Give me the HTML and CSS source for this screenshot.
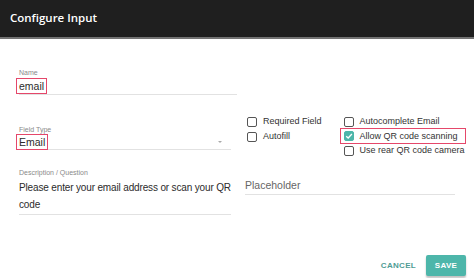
FILE: index.html
```html
<!DOCTYPE html>
<html lang="en">
<head>
    <meta charset="UTF-8">
    <title>Configure Input</title>
    <link rel="stylesheet" href="styles.css">
</head>
<body>
    <div class="dialog">
        <div class="dialog-header">Configure Input</div>

        <div class="dialog-body">
            <!-- name -->
            <div class="field field-name">
                <div class="field-label">Name</div>
                <div class="field-value"><span class="mark">email</span></div>
            </div>

            <div class="row row-type">
                <div class="field field-type">
                    <div class="field-label">Field Type</div>
                    <div class="field-value select">
                        <span class="mark">Email</span>
                        <span class="caret"></span>
                    </div>
                </div>

                <div class="options">
                    <div class="option-col">
                        <label class="check"><span class="box"></span>Required Field</label>
                        <label class="check"><span class="box"></span>Autof&#8204;i&#8204;l&#8204;l</label>
                    </div>
                    <div class="option-col">
                        <label class="check"><span class="box"></span>Autocomplete Email</label>
                        <label class="check mark-row"><span class="box checked">
                            <svg viewBox="0 0 10 10" width="8" height="8"><path d="M1.5 5.2 L4 7.5 L8.6 2.5" fill="none" stroke="#fff" stroke-width="1.6"/></svg>
                        </span>Allow QR code scanning</label>
                        <label class="check"><span class="box"></span>Use rear QR code camera</label>
                    </div>
                </div>
            </div>

            <div class="row row-desc">
                <div class="field field-desc">
                    <div class="field-label">Description / Question</div>
                    <div class="field-value multi">Please enter your email address or scan your QR code</div>
                </div>
                <div class="field field-placeholder">
                    <div class="field-value hint">Placeholder</div>
                </div>
            </div>
        </div>

        <div class="dialog-actions">
            <button class="btn btn-flat">CANCEL</button>
            <button class="btn btn-raised">SAVE</button>
        </div>
    </div>
</body>
</html>
```

FILE: styles.css
```css
:root {
    --teal: #4db6aa;
    --mark: #e5476a;
    --line: #e2e2e2;
    --text: #2b2b2b;
}

html, body {
    margin: 0;
    padding: 0;
    background: #fff;
}

body {
    font-family: "Liberation Sans", Arial, sans-serif;
    font-variant-ligatures: none;
    font-feature-settings: "liga" 0, "clig" 0;
    color: var(--text);
}

.dialog {
    width: 474px;
    height: 278px;
    display: flex;
    flex-direction: column;
}

.dialog-header {
    height: 37px;
    background: #1f1f1f;
    border-bottom: 2px solid #737373;
    color: #fff;
    font-family: "Open Sans", sans-serif;
    font-weight: 600;
    font-size: 11.5px;
    line-height: 36px;
    padding-left: 10px;
    box-sizing: content-box;
}

.dialog-body {
    flex: 1;
    padding: 0 0 0 19px;
}

.field-label {
    font-size: 7px;
    line-height: 10px;
    color: #8a8a8a;
}

.field-value {
    font-size: 10.5px;
    line-height: 16px;
    border-bottom: 1px solid var(--line);
}

.mark {
    display: inline-block;
    outline: 1.5px solid var(--mark);
    padding: 0 2px;
    margin-left: -2px;
    line-height: 14px;
}

.field-name {
    width: 218px;
    margin-top: 29px;
}

.row {
    display: flex;
    align-items: flex-start;
}

.row-type {
    margin-top: 17px;
}

.field-type {
    width: 212px;
    margin-top: 13px;
}

.select {
    display: flex;
    justify-content: space-between;
    align-items: center;
}

.caret {
    width: 0;
    height: 0;
    border-left: 2px solid transparent;
    border-right: 2px solid transparent;
    border-top: 2px solid #aaa;
    margin-right: 9px;
}

.options {
    display: flex;
    margin-left: 16px;
    margin-top: 2px;
}

.option-col {
    display: flex;
    flex-direction: column;
}

.option-col + .option-col {
    margin-left: 22px;
}

.check {
    display: flex;
    align-items: center;
    font-size: 9px;
    line-height: 15px;
    color: #333;
    height: 15px;
}

.box {
    width: 8px;
    height: 8px;
    border: 1.4px solid #555;
    border-radius: 2px;
    margin-right: 6px;
    display: inline-flex;
    align-items: center;
    justify-content: center;
}

.box.checked {
    background: var(--teal);
    border-color: var(--teal);
}

.mark-row {
    outline: 1.8px solid var(--mark);
    margin-left: -3px;
    padding-left: 3px;
    padding-right: 6px;
    height: 14px;
}

.row-desc {
    margin-top: 10px;
}

.field-desc {
    width: 212px;
}

.multi {
    font-size: 10px;
    letter-spacing: -0.15px;
    line-height: 17px;
    padding-bottom: 1px;
    margin-top: 1px;
}

.field-placeholder {
    width: 210px;
    margin-left: 14px;
    margin-top: 8px;
}

.hint {
    color: #666;
    line-height: 18px;
}

.dialog-actions {
    display: flex;
    justify-content: flex-end;
    align-items: center;
    padding: 0 8px 2px 0;
    gap: 10px;
}

.btn {
    font-family: "Liberation Sans", Arial, sans-serif;
    font-weight: 700;
    font-size: 8px;
    letter-spacing: 0.3px;
    border: none;
    cursor: pointer;
}

.btn-flat {
    background: none;
    color: #4f9c94;
    padding: 0;
}

.btn-raised {
    background: var(--teal);
    color: #fff;
    width: 40px;
    height: 21px;
    border-radius: 2px;
    box-shadow: 0 2px 2px rgba(0,0,0,0.25);
}
```
